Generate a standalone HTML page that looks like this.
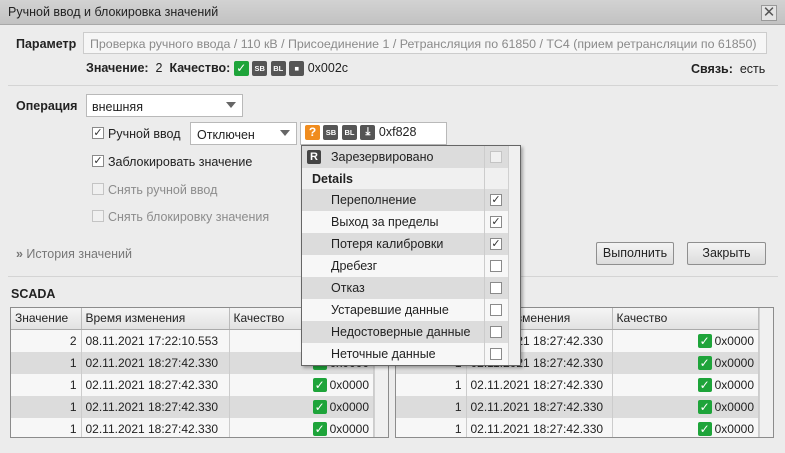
<!DOCTYPE html><html><head><meta charset="utf-8"><style>
*{box-sizing:border-box;margin:0;padding:0}
body{width:785px;height:453px;overflow:hidden;background:#ececec;font-family:"Liberation Sans","DejaVu Sans",sans-serif;font-size:12.5px;color:#222;position:relative}
.a{position:absolute;white-space:nowrap}
.b{font-weight:bold}
.in{position:absolute;background:#fff;border:1px solid #b9b9b9}
.cb{position:absolute;width:12px;height:12px;border:1px solid #8a8a8a;background:#fff;font-size:11px;line-height:10px;text-align:center;color:#333}
.cb.d{border-color:#c4c4c4;background:#f0f0f0}
.ic{display:inline-block;width:15px;height:15px;border-radius:2px;color:#fff;font-size:7.5px;font-weight:bold;text-align:center;line-height:15px;vertical-align:middle;background:#555;overflow:hidden}
.g{background:#1ea43a;font-size:12px}
.q{display:flex;justify-content:flex-end;align-items:center;gap:3px;height:22px;line-height:14px}
.q .ic{width:14px;height:14px;line-height:14px}
.tri{position:absolute;width:0;height:0;border-left:5px solid transparent;border-right:5px solid transparent;border-top:6px solid #666}
.btn{position:absolute;border:1px solid #8f8f8f;background:linear-gradient(#f4f4f4,#dcdcdc);border-radius:2px;text-align:center;line-height:21px;font-size:12.5px}
table{border-collapse:collapse;position:absolute;background:#fff;font-size:12px}
td,th{height:22px;padding:0 4px;white-space:nowrap;vertical-align:middle}
th{font-weight:normal;text-align:left;background:linear-gradient(#f5f5f5,#e2e2e2);border-right:1px solid #bbb;border-bottom:1px solid #aaa;height:21px}
td{border-right:1px solid #ccc}
tr.s td{background:#dcdcdc}
tr.w td{background:#f7f7f7}
.tb{position:absolute;border:1px solid #8c8c8c;overflow:hidden;background:#fff}
.sb{position:absolute;background:#f0f0f0;border-left:1px solid #d0d0d0}
.pop{position:absolute;left:301px;top:145px;width:220px;height:221px;background:#f5f5f5;border:1px solid #666;box-shadow:2px 2px 3px rgba(0,0,0,.3);overflow:hidden}
.pr{position:absolute;left:0;width:206px;height:22px;line-height:22px}
.pr span{position:absolute;left:29px}
.pr .cb{left:188px;top:5px}
</style></head><body>
<div class="a" style="left:0;top:0;width:785px;height:25px;background:linear-gradient(#d2d2d2,#c2c2c2);border-bottom:1px solid #a8a8a8"></div>
<div class="a" style="left:8px;top:5px;font-size:12.5px">Ручной ввод и блокировка значений</div>
<div class="a" style="left:761px;top:5px;width:16px;height:16px;border:1px solid #999;background:#e4e4e4;text-align:center;line-height:14px;font-size:15px;color:#555">✕</div>

<div class="a b" style="left:16px;top:37px;font-size:12.5px">Параметр</div>
<div class="in" style="left:83px;top:32px;width:684px;height:22px;background:#f6f6f6;border-color:#ccc"></div>
<div class="a" style="left:90px;top:37px;color:#8a8a8a;font-size:12.4px">Проверка ручного ввода / 110 кВ / Присоединение 1 / Ретрансляция по 61850 / ТС4 (прием ретрансляции по 61850)</div>
<div class="a" style="left:86px;top:61px"><b>Значение:</b>&nbsp; 2 &nbsp;<b>Качество:</b> <span class="ic g">✓</span> <span class="ic">SB</span> <span class="ic">BL</span> <span class="ic">■</span> 0x002c</div>
<div class="a" style="left:691px;top:62px"><b>Связь:</b>&nbsp; есть</div>
<div class="a" style="left:8px;top:85px;width:770px;height:1px;background:#d4d4d4"></div>

<div class="a b" style="left:16px;top:99px;font-size:12.5px">Операция</div>
<div class="in" style="left:86px;top:94px;width:157px;height:23px"></div>
<div class="a" style="left:92px;top:100px">внешняя</div>
<div class="tri" style="left:226px;top:102px"></div>

<div class="cb" style="left:92px;top:127px">✓</div>
<div class="a" style="left:108px;top:127px">Ручной ввод</div>
<div class="in" style="left:190px;top:122px;width:107px;height:23px"></div>
<div class="a" style="left:197px;top:128px">Отключен</div>
<div class="tri" style="left:280px;top:130px"></div>
<div class="in" style="left:300px;top:122px;width:147px;height:23px"></div>
<div class="a" style="left:305px;top:125px"><span class="ic" style="background:#f08c1e;font-size:12px">?</span> <span class="ic">SB</span> <span class="ic">BL</span> <span class="ic" style="font-size:11px">⤓</span> 0xf828</div>

<div class="cb" style="left:92px;top:155px">✓</div>
<div class="a" style="left:108px;top:155px">Заблокировать значение</div>
<div class="cb d" style="left:92px;top:183px"></div>
<div class="a" style="left:108px;top:183px;color:#8c8c8c">Снять ручной ввод</div>
<div class="cb d" style="left:92px;top:210px"></div>
<div class="a" style="left:108px;top:210px;color:#8c8c8c">Снять блокировку значения</div>

<div class="a" style="left:16px;top:247px;color:#777;font-size:12.5px"><b>»</b> История значений</div>
<div class="btn" style="left:596px;top:242px;width:78px;height:23px">Выполнить</div>
<div class="btn" style="left:687px;top:242px;width:79px;height:23px">Закрыть</div>
<div class="a" style="left:8px;top:276px;width:770px;height:1px;background:#d4d4d4"></div>
<div class="a b" style="left:11px;top:287px;font-size:12.5px">SCADA</div>

<div class="tb" style="left:10px;top:307px;width:379px;height:131px">
<table style="left:0;top:0;width:363px">
<tr><th style="width:70px">Значение</th><th style="width:148px">Время изменения</th><th>Качество</th></tr>
<tr class="w"><td style="text-align:right">2</td><td>08.11.2021 17:22:10.553</td><td><div class="q"><span class="ic g">✓</span><span class="ic">SB</span><span class="ic">BL</span></div></td></tr>
<tr class="s"><td style="text-align:right">1</td><td>02.11.2021 18:27:42.330</td><td><div class="q"><span class="ic g">✓</span>0x0000</div></td></tr>
<tr class="w"><td style="text-align:right">1</td><td>02.11.2021 18:27:42.330</td><td><div class="q"><span class="ic g">✓</span>0x0000</div></td></tr>
<tr class="s"><td style="text-align:right">1</td><td>02.11.2021 18:27:42.330</td><td><div class="q"><span class="ic g">✓</span>0x0000</div></td></tr>
<tr class="w"><td style="text-align:right">1</td><td>02.11.2021 18:27:42.330</td><td><div class="q"><span class="ic g">✓</span>0x0000</div></td></tr>
</table>
<div class="sb" style="left:363px;top:0;width:15px;height:131px"></div>
</div>

<div class="tb" style="left:395px;top:307px;width:379px;height:131px">
<table style="left:0;top:0;width:363px">
<tr><th style="width:70px">Значение</th><th style="width:146px">Время изменения</th><th>Качество</th></tr>
<tr class="w"><td style="text-align:right">1</td><td>02.11.2021 18:27:42.330</td><td><div class="q"><span class="ic g">✓</span>0x0000</div></td></tr>
<tr class="s"><td style="text-align:right">1</td><td>02.11.2021 18:27:42.330</td><td><div class="q"><span class="ic g">✓</span>0x0000</div></td></tr>
<tr class="w"><td style="text-align:right">1</td><td>02.11.2021 18:27:42.330</td><td><div class="q"><span class="ic g">✓</span>0x0000</div></td></tr>
<tr class="s"><td style="text-align:right">1</td><td>02.11.2021 18:27:42.330</td><td><div class="q"><span class="ic g">✓</span>0x0000</div></td></tr>
<tr class="w"><td style="text-align:right">1</td><td>02.11.2021 18:27:42.330</td><td><div class="q"><span class="ic g">✓</span>0x0000</div></td></tr>
</table>
<div class="sb" style="left:363px;top:0;width:15px;height:131px"></div>
</div>

<div class="pop">
<div class="pr" style="top:0;background:#dcdcdc"><div class="ic" style="position:absolute;left:5px;top:4px;width:14px;height:14px;font-size:11px;line-height:14px;background:#444">R</div><span>Зарезервировано</span><div class="cb d"></div></div>
<div class="pr" style="top:22px;background:#f0f0f0"><b style="position:absolute;left:10px">Details</b></div>
<div class="pr" style="top:43px;background:#dcdcdc"><span>Переполнение</span><div class="cb">✓</div></div>
<div class="pr" style="top:65px;background:#f7f7f7"><span>Выход за пределы</span><div class="cb">✓</div></div>
<div class="pr" style="top:87px;background:#dcdcdc"><span>Потеря калибровки</span><div class="cb">✓</div></div>
<div class="pr" style="top:109px;background:#f7f7f7"><span>Дребезг</span><div class="cb"></div></div>
<div class="pr" style="top:131px;background:#dcdcdc"><span>Отказ</span><div class="cb"></div></div>
<div class="pr" style="top:153px;background:#f7f7f7"><span>Устаревшие данные</span><div class="cb"></div></div>
<div class="pr" style="top:175px;background:#dcdcdc"><span>Недостоверные данные</span><div class="cb"></div></div>
<div class="pr" style="top:197px;background:#f7f7f7"><span>Неточные данные</span><div class="cb"></div></div>
<div class="a" style="left:182px;top:0;width:1px;height:221px;background:#ccc"></div>
<div class="sb" style="left:206px;top:0;width:13px;height:221px"></div>
</div>
</body></html>
